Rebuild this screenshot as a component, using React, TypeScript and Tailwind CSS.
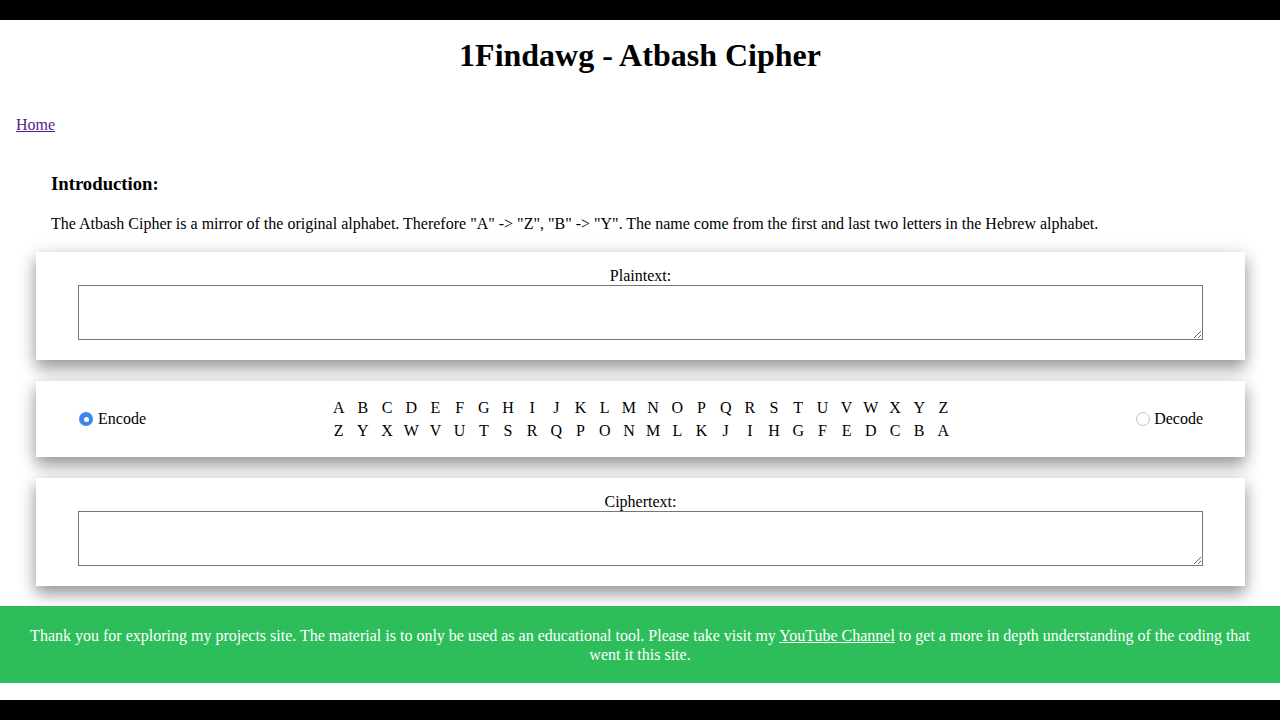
import React from "react";

const top = "ABCDEFGHIJKLMNOPQRSTUVWXYZ".split("");
const bottom = [...top].reverse();

const cardCls =
  "ml-[36px] mr-[35px] bg-white shadow-[0_8px_14px_0_rgba(0,0,0,0.32),0_4px_20px_0_rgba(0,0,0,0.16)]";

function TextCard({ label, className }: { label: string; className?: string }) {
  return (
    <div className={`${cardCls} pt-[15px] pb-[20px] pl-[42px] pr-[42px] ${className ?? ""}`}>
      <div className="text-center text-[16px] leading-[18px]">{label}</div>
      <textarea className="block w-full h-[55px] border border-[#767676] bg-white resize" />
    </div>
  );
}

export default function App() {
  return (
    <div className="w-[1280px] h-[720px] overflow-hidden bg-white text-black font-['Liberation_Serif',serif] flex flex-col">
      <div className="h-[20px] bg-black shrink-0" />
      <h1 className="mt-[17px] text-center text-[32px] leading-[37px] font-bold">
        1Findawg - Atbash Cipher
      </h1>
      <div className="mt-[42px] pl-[16px] text-[16px] leading-[18px]">
        <a href="#" className="text-[#551a8b] underline">
          Home
        </a>
      </div>
      <h3 className="mt-[39px] pl-[51px] text-[18.72px] leading-[22px] font-bold">Introduction:</h3>
      <p className="mt-[20px] pl-[51px] text-[16px] leading-[18px]">
        The Atbash Cipher is a mirror of the original alphabet. Therefore "A" -&gt; "Z", "B" -&gt; "Y". The name
        come from the first and last two letters in the Hebrew alphabet.
      </p>
      <TextCard label="Plaintext:" className="mt-[19px]" />
      <div className={`${cardCls} mt-[21px] h-[76px] pl-[43px] pr-[42px] grid grid-cols-[1fr_auto_1fr] items-center`}>
        <label className="flex items-center text-[16px] leading-[18px]">
          <span className="w-[14px] h-[14px] rounded-full bg-[#3d86f0] flex items-center justify-center">
            <span className="w-[5px] h-[5px] rounded-full bg-white" />
          </span>
          <span className="ml-[5px]">Encode</span>
        </label>
        <div className="grid grid-cols-[repeat(26,24.2px)] text-[16px] leading-[23px] text-center">
          {top.map((c) => (
            <span key={"t" + c}>{c}</span>
          ))}
          {bottom.map((c) => (
            <span key={"b" + c}>{c}</span>
          ))}
        </div>
        <label className="flex items-center justify-end text-[16px] leading-[18px]">
          <span className="w-[14px] h-[14px] rounded-full border border-[#c4c4c4] bg-white" />
          <span className="ml-[4px]">Decode</span>
        </label>
      </div>
      <TextCard label="Ciphertext:" className="mt-[21px]" />
      <div className="mt-[20px] h-[77px] bg-[#2ebd5b] text-white text-center text-[16px] leading-[19px] px-[22px] pt-[20px]">
        Thank you for exploring my projects site. The material is to only be used as an educational tool. Please
        take visit my{" "}
        <a href="#" className="underline text-white">
          YouTube Channel
        </a>{" "}
        to get a more in depth understanding of the coding that went it this site.
      </div>
      <div className="flex-1" />
      <div className="h-[20px] bg-black shrink-0" />
    </div>
  );
}
